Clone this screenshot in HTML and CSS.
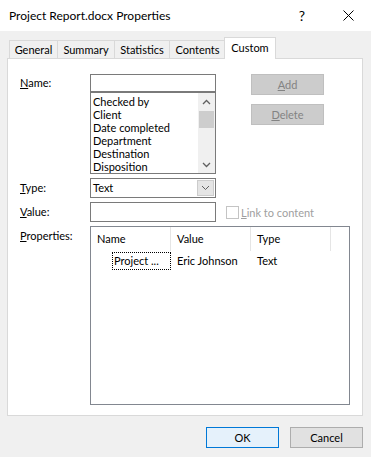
FILE: index.html
```html
<!DOCTYPE html>
<html lang="en">
<head>
    <meta charset="UTF-8">
    <meta name="viewport" content="width=device-width, initial-scale=1.0">
    <title>Project Report.docx Properties</title>
    <link rel="stylesheet" href="styles.css">
</head>
<body>

<div class="window">
    <div class="titlebar">
        <span class="title">Project Report.docx Properties</span>
        <span class="tb-btn help">?</span>
        <span class="tb-btn close">
            <svg width="11" height="11" viewBox="0 0 11 11">
                <path d="M0.5 0.5 L10.5 10.5 M10.5 0.5 L0.5 10.5" stroke="#000" stroke-width="1" fill="none"/>
            </svg>
        </span>
    </div>

    <div class="client">
        <div class="tabs">
            <div class="tab tab-general">General</div>
            <div class="tab tab-summary">Summary</div>
            <div class="tab tab-statistics">Statistics</div>
            <div class="tab tab-contents">Contents</div>
            <div class="tab tab-custom active">Custom</div>
            <div class="tab-fill"></div>
        </div>

        <div class="panel">
            <div class="form">
                <!-- name -->
                <label class="lbl lbl-top"><u>N</u>ame:</label>
                <div class="name-group">
                    <div class="textbox name-box"></div>
                    <div class="listbox">
                        <ul class="listbox-items">
                            <li>Checked by</li>
                            <li>Client</li>
                            <li>Date completed</li>
                            <li>Department</li>
                            <li>Destination</li>
                            <li>Disposition</li>
                        </ul>
                        <div class="scrollbar">
                            <div class="sb-arrow">
                                <svg width="9" height="6" viewBox="0 0 9 6"><polyline points="1,5 4.5,1.5 8,5" fill="none" stroke="#606060" stroke-width="1.3"/></svg>
                            </div>
                            <div class="sb-thumb"></div>
                            <div class="sb-track"></div>
                            <div class="sb-arrow">
                                <svg width="9" height="6" viewBox="0 0 9 6"><polyline points="1,1 4.5,4.5 8,1" fill="none" stroke="#606060" stroke-width="1.3"/></svg>
                            </div>
                        </div>
                    </div>
                </div>
                <div class="side-buttons">
                    <div class="btn disabled"><u>A</u>dd</div>
                    <div class="btn disabled"><u>D</u>elete</div>
                </div>

                <!-- type -->
                <label class="lbl"><u>T</u>ype:</label>
                <div class="combo">
                    <span class="combo-text">Text</span>
                    <span class="combo-btn">
                        <svg width="9" height="6" viewBox="0 0 9 6"><polyline points="1,1 4.5,4.5 8,1" fill="none" stroke="#606060" stroke-width="1"/></svg>
                    </span>
                </div>
                <div></div>

                <!-- value -->
                <label class="lbl"><u>V</u>alue:</label>
                <div class="textbox value-box"></div>
                <div class="link-check">
                    <span class="checkbox"></span>
                    <span><u>L</u>ink to content</span>
                </div>

                <!-- properties -->
                <label class="lbl lbl-props"><u>P</u>roperties:</label>
                <div class="listview">
                    <div class="lv-header">
                        <div class="lv-col">Name</div>
                        <div class="lv-col">Value</div>
                        <div class="lv-col">Type</div>
                    </div>
                    <div class="lv-row">
                        <div class="lv-cell lv-name"><span class="focus">Project ...</span></div>
                        <div class="lv-cell">Eric Johnson</div>
                        <div class="lv-cell">Text</div>
                    </div>
                </div>
            </div>
        </div>

        <div class="footer">
            <div class="btn default">OK</div>
            <div class="btn">Cancel</div>
        </div>
    </div>
</div>

</body>
</html>
```

FILE: styles.css
```css
* {
    box-sizing: border-box;
}
body {
    margin: 0;
    font-family: Lato, "Noto Sans", sans-serif;
    font-size: 11px;
    color: #000;
    background-color: #f0f0f0;
}
.window {
    width: 371px;
    height: 457px;
    display: flex;
    flex-direction: column;
    overflow: hidden;
}

/* title bar */
.titlebar {
    height: 31px;
    flex: none;
    background-color: #fff;
    display: flex;
    align-items: center;
    font-size: 12px;
}
.title {
    flex: 1;
    padding-left: 9px;
}
.tb-btn {
    width: 46px;
    height: 31px;
    display: flex;
    align-items: center;
    justify-content: center;
}
.help {
    font-size: 14px;
}

/* client area */
.client {
    flex: 1;
    padding: 6px 8px 0 7px;
    display: flex;
    flex-direction: column;
}
.tabs {
    display: flex;
    align-items: flex-end;
    height: 22px;
    padding-left: 2px;
}
.tabs::before {
    content: "";
    width: 2px;
    margin-left: -2px;
    height: 100%;
    border-bottom: 1px solid #d9d9d9;
}
.tab {
    height: 19px;
    line-height: 17px;
    text-align: center;
    border: 1px solid #d9d9d9;
    margin-left: -1px;
    background-color: #f0f0f0;
}
.tab-general { width: 49px; margin-left: 0; }
.tab-summary { width: 58px; }
.tab-statistics { width: 56px; }
.tab-contents { width: 57px; }
.tab.active {
    width: 52px;
    height: 22px;
    line-height: 19px;
    margin-left: -2px;
    background-color: #fff;
    border-bottom: none;
}
.tab-fill {
    flex: 1;
    height: 100%;
    border-bottom: 1px solid #d9d9d9;
}

.panel {
    height: 357px;
    background-color: #fff;
    border: 1px solid #d9d9d9;
    border-top: none;
    padding: 15px 12px 10px 12px;
}

.form {
    display: grid;
    grid-template-columns: 70px 126px 1fr;
    grid-template-rows: 100px 20px 20px 179px;
    row-gap: 4px;
}
.lbl {
    line-height: 20px;
}
.lbl-top {
    line-height: 17px;
    align-self: start;
}
.lbl-props {
    line-height: 20px;
    align-self: start;
}

.textbox {
    border: 1px solid #7a7a7a;
    background-color: #fff;
}
.name-box {
    height: 18px;
}
.value-box {
    height: 20px;
}

.listbox {
    height: 82px;
    border: 1px solid #7a7a7a;
    display: flex;
}
.listbox-items {
    list-style: none;
    margin: 0;
    padding: 2px 0 0 2px;
    flex: 1;
}
.listbox-items li {
    height: 13px;
    line-height: 13px;
    white-space: nowrap;
}
.scrollbar {
    width: 17px;
    background-color: #f0f0f0;
    display: flex;
    flex-direction: column;
}
.sb-arrow {
    height: 17px;
    display: flex;
    align-items: center;
    justify-content: center;
}
.sb-thumb {
    height: 17px;
    margin: 1px 1px 0 1px;
    background-color: #cdcdcd;
}
.sb-track {
    flex: 1;
}

.side-buttons {
    padding-left: 35px;
    display: flex;
    flex-direction: column;
    gap: 9px;
}

.btn {
    width: 73px;
    height: 21px;
    line-height: 19px;
    text-align: center;
    border: 1px solid #adadad;
    background-color: #e1e1e1;
}
.btn.disabled {
    background-color: #cccccc;
    border-color: #bfbfbf;
    color: #838383;
}
.btn.default {
    background-color: #e5f1fb;
    border-color: #0078d7;
}

.combo {
    height: 20px;
    border: 1px solid #7a7a7a;
    display: flex;
}
.combo-text {
    flex: 1;
    padding-left: 2px;
    line-height: 17px;
}
.combo-btn {
    width: 17px;
    margin: 1px 1px 1px 0;
    background-color: #e5e5e5;
    border: 1px solid #cccccc;
    display: flex;
    align-items: center;
    justify-content: center;
}

.link-check {
    padding-left: 10px;
    display: flex;
    align-items: center;
    gap: 2px;
    color: #a0a0a0;
}
.checkbox {
    width: 13px;
    height: 13px;
    border: 1px solid #c4c4c4;
    background-color: #fff;
}

.listview {
    grid-column: 2 / 4;
    border: 1px solid #828790;
    background-color: #fff;
}
.lv-header {
    display: flex;
    height: 24px;
}
.lv-col {
    width: 80px;
    padding-left: 6px;
    line-height: 24px;
    border-right: 1px solid #e5e5e5;
}
.lv-row {
    display: flex;
    height: 18px;
    margin-top: 1px;
}
.lv-cell {
    width: 80px;
    padding-left: 6px;
    line-height: 18px;
    white-space: nowrap;
}
.lv-name {
    padding-left: 21px;
}
.focus {
    display: block;
    height: 18px;
    line-height: 16px;
    padding-left: 1px;
    border: 1px dotted #000;
}

.footer {
    display: flex;
    justify-content: flex-end;
    gap: 11px;
    padding-top: 11px;
}
```
